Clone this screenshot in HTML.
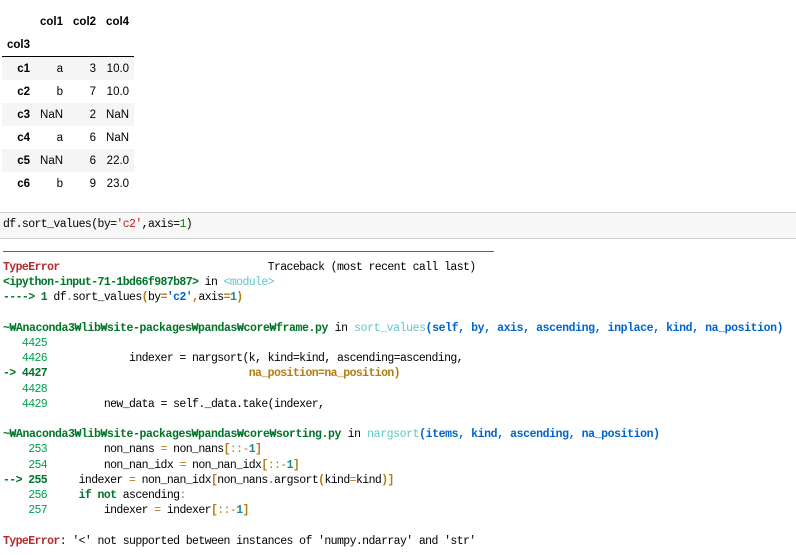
<!DOCTYPE html>
<html><head><meta charset="utf-8"><style>
body{margin:0;width:796px;height:555px;background:#fff;position:relative;overflow:hidden;font-family:"Liberation Sans",Arial,sans-serif}
table{position:absolute;left:2px;top:10px;border-collapse:collapse;font-size:11.5px;color:#000}
td,th{text-align:right;padding:0 5px;height:23px;vertical-align:middle}
th{font-weight:bold}
tr.s td,tr.s th{background:#f5f5f5}
thead tr.b th{border-bottom:1px solid #000}
.inp{position:absolute;left:0;top:212px;width:796px;height:25px;background:#f7f7f7;border-top:1px solid #cfcfcf;border-bottom:1px solid #cfcfcf}
pre{margin:0;font-family:"Liberation Mono",monospace;font-size:11.5px;letter-spacing:-0.6px;white-space:pre;position:absolute;left:3px}
.hr{position:absolute;left:3px;top:251px;width:491px;height:1px;background:#c0393e}
.r{color:#b22b31;font-weight:bold}.g{color:#007427;font-weight:bold}.n{color:#00a250}.c{color:#60c6c8}.bl{color:#0065ca;font-weight:bold}.y{color:#b27d12;font-weight:bold}.yn{color:#b27d12}
.w{letter-spacing:-0.4px}
</style></head><body>
<table>
<thead>
<tr><th></th><th>col1</th><th>col2</th><th>col4</th></tr>
<tr class="b"><th style="text-align:left">col3</th><th></th><th></th><th></th></tr>
</thead>
<tbody>
<tr class="s"><th>c1</th><td>a</td><td>3</td><td>10.0</td></tr>
<tr><th>c2</th><td>b</td><td>7</td><td>10.0</td></tr>
<tr class="s"><th>c3</th><td>NaN</td><td>2</td><td>NaN</td></tr>
<tr><th>c4</th><td>a</td><td>6</td><td>NaN</td></tr>
<tr class="s"><th>c5</th><td>NaN</td><td>6</td><td>22.0</td></tr>
<tr><th>c6</th><td>b</td><td>9</td><td>23.0</td></tr>
</tbody></table>
<div class="inp"></div>
<pre style="top:217px;line-height:15px">df.sort_values(by=<span style="color:#ba2121">'c2'</span>,axis=<span style="color:#080">1</span>)</pre>
<div class="hr"></div>
<pre style="top:260px;line-height:15.2px"><span class="r">TypeError</span>                                 Traceback (most recent call last)
<span class="g">&lt;ipython-input-71-1bd66f987b87&gt;</span> in <span class="c">&lt;module&gt;</span>
<span class="g">----&gt; 1</span> df<span class="y">.</span>sort_values<span class="y">(</span>by<span class="y">=</span><span class="bl">'c2'</span><span class="y">,</span>axis<span class="y">=</span><span style="color:#208a8a;font-weight:bold">1</span><span class="y">)</span>

<span class="w"><span class="g">~₩Anaconda3₩lib₩site-packages₩pandas₩core₩frame.py</span> in <span class="c">sort_values</span><span class="bl">(self, by, axis, ascending, inplace, kind, na_position)</span></span>
<span class="n">   4425</span> 
<span class="n">   4426</span>             indexer = nargsort(k, kind=kind, ascending=ascending,
<span class="g">-&gt; 4427</span>                                <span class="y">na_position=na_position)</span>
<span class="n">   4428</span> 
<span class="n">   4429</span>         new_data = self._data.take(indexer,

<span class="w"><span class="g">~₩Anaconda3₩lib₩site-packages₩pandas₩core₩sorting.py</span> in <span class="c">nargsort</span><span class="bl">(items, kind, ascending, na_position)</span></span>
<span class="n">    253</span>         non_nans <span class="yn">=</span> non_nans<span class="y">[</span><span class="yn">::-</span><span style="color:#208a8a;font-weight:bold">1</span><span class="y">]</span>
<span class="n">    254</span>         non_nan_idx <span class="yn">=</span> non_nan_idx<span class="y">[</span><span class="yn">::-</span><span style="color:#208a8a;font-weight:bold">1</span><span class="y">]</span>
<span class="g">--&gt; 255</span>     indexer <span class="yn">=</span> non_nan_idx<span class="y">[</span>non_nans<span class="y">.</span>argsort<span class="y">(</span>kind<span class="yn">=</span>kind<span class="y">)]</span>
<span class="n">    256</span>     <span class="g">if</span> <span class="g">not</span> ascending<span class="yn">:</span>
<span class="n">    257</span>         indexer <span class="yn">=</span> indexer<span class="y">[</span><span class="yn">::-</span><span style="color:#208a8a;font-weight:bold">1</span><span class="y">]</span>

<span class="r">TypeError</span>: '&lt;' not supported between instances of 'numpy.ndarray' and 'str'</pre>
</body></html>
